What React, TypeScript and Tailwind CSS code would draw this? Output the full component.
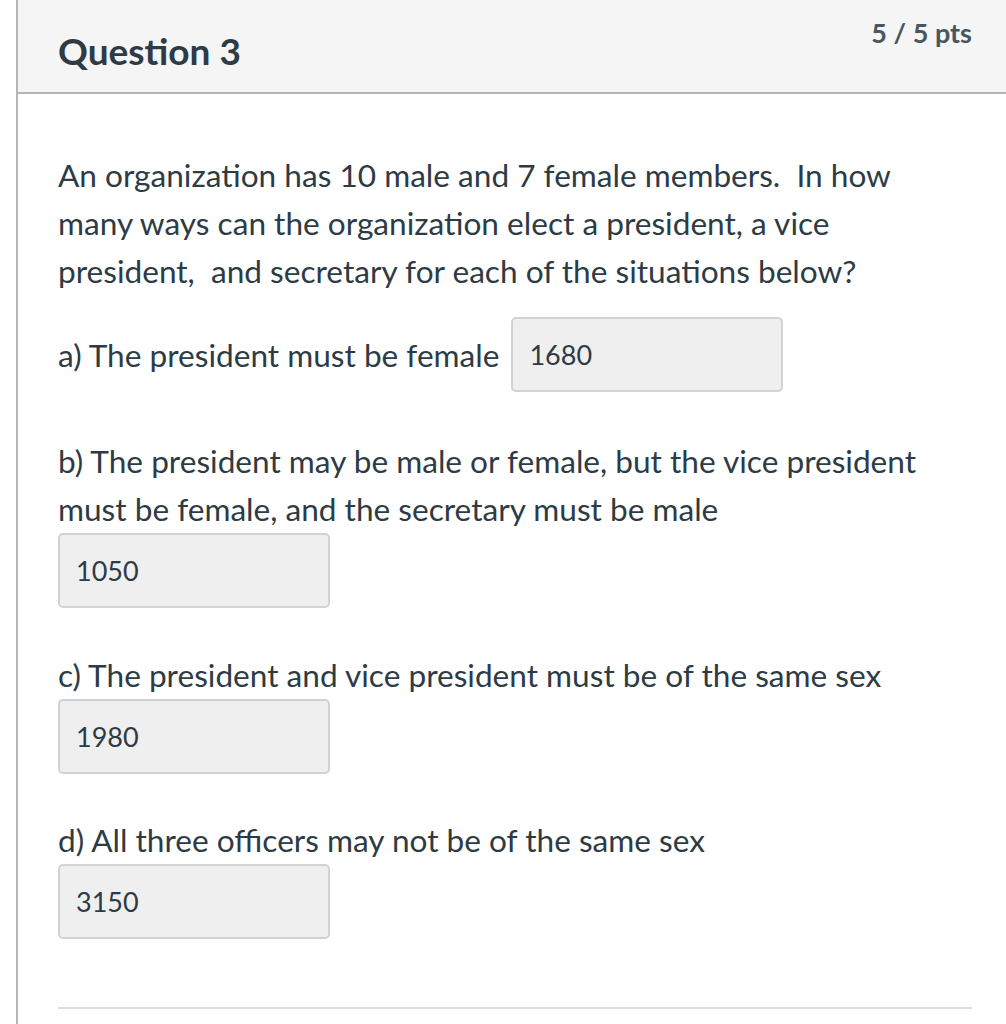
const font = { fontFamily: 'Lato, "Noto Sans", sans-serif' };

function Answer({ value }: { value: string }) {
    return (
        <div className="w-[272px] h-[75px] rounded-[5px] border-2 border-[#cfd3d6] bg-[#efefef] flex items-center pl-[16px] text-[27px] text-[#2d3b45]">
            {value}
        </div>
    );
}

export default function App() {
    return (
        <div className="w-[1006px] h-[1024px] bg-white overflow-hidden" style={font}>
            <div className="ml-[16px] h-full border-l-2 border-[#b5b5b5]">
                <div className="h-[94px] bg-[#f5f5f5] border-b-2 border-[#b5b5b5] flex justify-between pl-[40px] pr-[34px]">
                    <h2 className="pt-[26px] text-[37px] font-bold text-[#2d3b45] leading-[50px]">Question 3</h2>
                    <div className="pt-[15px] text-[27px] font-bold text-[#4a555e] leading-[36px]">5 / 5 pts</div>
                </div>

                <div className="pl-[40px] pr-[34px] pt-[57px] text-[31.6px] leading-[48px] text-[#2d3b45]">
                    <div className="max-w-[880px]">
                        <p>
                            An organization has 10 male and 7 female members.&nbsp; In how many ways can the organization elect a president, a vice president,&nbsp; and secretary for each of the situations below?
                        </p>

                        <div className="mt-[22px] flex items-center gap-[12px]">
                            <span>a) The president must be female</span>
                            <Answer value="1680" />
                        </div>

                        <p className="mt-[45px]">b) The president may be male or female, but the vice president must be female, and the secretary must be male</p>
                        <Answer value="1050" />

                        <p className="mt-[43px]">c) The president and vice president must be of the same sex</p>
                        <Answer value="1980" />

                        <p className="mt-[42px]">d) All three officers may not be of the same sex</p>
                        <Answer value="3150" />
                    </div>

                    <div className="mt-[68px] h-[2px] bg-[#dddddd]" />
                </div>
            </div>
        </div>
    );
}
